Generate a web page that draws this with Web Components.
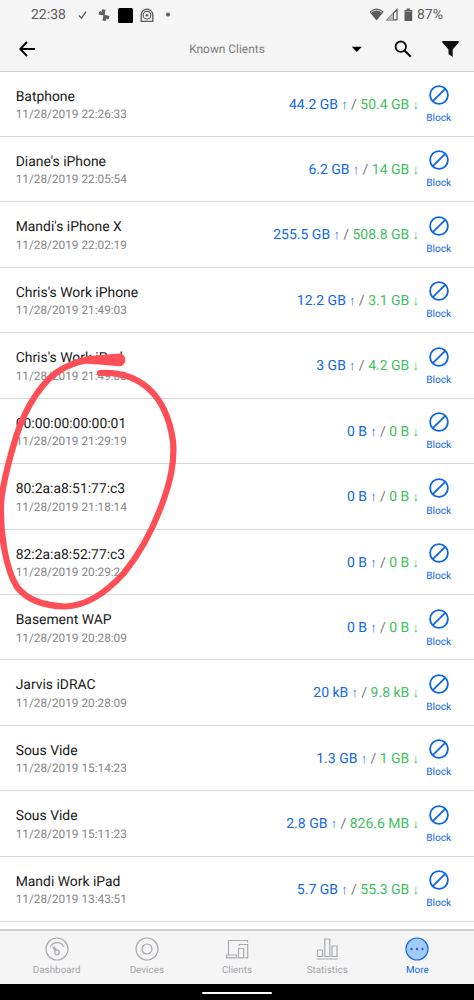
<!DOCTYPE html>
<html lang="en">
<head>
<meta charset="utf-8">
<title>Known Clients</title>
<style>
html,body{margin:0;height:100%;overflow:hidden;background:#fff}
body{font-family:Roboto,sans-serif;text-rendering:geometricPrecision}
</style>
</head>
<body>
<clients-app></clients-app>
<script>
const define = (name, html, init) => customElements.define(name, class extends HTMLElement {
  connectedCallback() {
    if (this.shadowRoot) return;
    const root = this.attachShadow({ mode: 'open' });
    const t = document.createElement('template');
    t.innerHTML = html;
    root.append(t.content.cloneNode(true));
    if (init) init.call(this, root);
  }
});

define('status-bar', `<style>
:host{display:flex;align-items:center;height:29px;padding:0 31px 0 31px;color:#5c5c5c;font-size:14px;line-height:29px}
svg{display:block;flex:none}
.grow{flex:1}
.time{width:47px;padding-top:1px}
.pct{margin-left:1px;padding-top:1px}
</style>
<span class="time">22:38</span>
<svg width="84" height="20" viewBox="78 4 84 20" fill="none" stroke="#5c5c5c">
<path d="M79 14.500l2.500 2.700L86 10.700" stroke-width="1.400"/>
<g fill="#5c5c5c" stroke="none" transform="rotate(12 104 14.200)"><path d="M104.400 14.200V8.700h-2.600a1.600 1.600 0 0 0 0 3v2.500z"/><path d="M104 13.800h5.500v2.600a1.600 1.600 0 0 1-3 0H104z"/><path d="M103.600 14.200v5.500h2.600a1.600 1.600 0 0 0 0-3v-2.500z"/><path d="M104 14.600h-5.500V12a1.600 1.600 0 0 1 3 0h2.500z"/></g>
<rect x="118" y="7" width="15" height="15" rx="1.500" fill="#000" stroke="none"/>
<path d="M141.200 20.300V14a5.800 5.800 0 0 1 11.600 0v6.300z" stroke-width="1.300"/><circle cx="147" cy="14.200" r="3.800" stroke-width="1.200"/><circle cx="147" cy="14.200" r="1.300" fill="#5c5c5c" stroke="none"/>
</svg>
<svg width="8" height="20" viewBox="0 0 8 20"><circle cx="6" cy="9.500" r="2" fill="#5c5c5c"/></svg>
<span class="grow"></span>
<svg width="46" height="20" viewBox="370 4.500 46 20" fill="#5c5c5c">
<path d="M369.300 11.200Q376.500 5 383.700 11.200L376.500 20z"/><path d="M371 11.700q5.500-4 11 0" fill="none" stroke="#d8d8d8" stroke-width="1"/>
<path d="M387 19.300L397 9v10.300z" fill="none" stroke="#5c5c5c" stroke-width="1.200"/><path d="M387 19.300L393.500 12.500v6.800z" fill="#bbb"/><path d="M393.500 12v7.500" stroke="#5c5c5c"/>
<path d="M404.500 9.500h2.200V8h3.200v1.500h2.300v11h-7.700z"/><path d="M405.500 11h5.700" stroke="#aaa" stroke-width=".8"/>
</svg>
<span class="pct">87%</span>`);

define('app-header', `<style>
:host{display:flex;align-items:center;justify-content:space-between;height:40px;padding:0 15px 0 19px}
svg{display:block}
.title{font-size:11.900px;color:#7c7c7c;margin-left:67px}
.left,.right{margin-top:-1px}
</style>
<svg class="left" width="17" height="16" viewBox="0 0 17 16" fill="none" stroke="#000" stroke-width="1.900"><path d="M16 8H1.500M8 1L1.300 8 8 15"/></svg>
<span class="title"><slot></slot></span>
<svg class="right" width="108" height="20" viewBox="351 39 108 20">
<path d="M351.800 46.800h10l-5 5.200z" fill="#000"/>
<circle cx="400.800" cy="46.700" r="5.200" fill="none" stroke="#111" stroke-width="1.900"/><path d="M404.500 50.500l6.300 6.200" stroke="#111" stroke-width="2.300"/>
<path d="M442.300 41h16.400v1.500l-6 7V57l-4.200-3v-4.500l-6.200-7z" fill="#111"/>
</svg>`);

define('block-button', `<style>
:host{display:flex;flex-direction:column;align-items:center;width:32px;color:#1269e4;font-size:10.200px;line-height:14px}
svg{display:block;margin-bottom:7px}
</style>
<svg width="20" height="20" viewBox="0 0 20 20" fill="none" stroke="#0d66e8" stroke-width="1.800"><circle cx="10" cy="10" r="8.900"/><path d="M16.200 3.800L3.800 16.200"/></svg>
<span>Block</span>`);

define('traffic-value', `<style>
:host{display:flex;align-items:center}
.arrow{margin-left:3.500px;width:6px;font:13px/20px "Liberation Sans",sans-serif;display:flex;justify-content:center}
</style><slot></slot><span class="arrow"></span>`, function (root) {
  root.querySelector('.arrow').textContent = this.getAttribute('direction') === 'up' ? '↑' : '↓';
});

define('client-row', `<style>
:host{display:flex;height:65.450px;box-sizing:border-box;border-bottom:1px solid #d7d7d7;padding:0 19.300px 0 15.700px}
.info{flex:1;padding-top:16px;min-width:0}
.name{font-size:13.900px;line-height:19px;color:#191919}
.date{font-size:11.800px;line-height:16px;color:#858585;margin-top:-.5px}
.usage{display:flex;height:20px;font-size:14px;line-height:20px;padding-top:23px;color:#777}
.slash{margin:0 3.500px}
.up{color:#1269e4}.down{color:#3fbf61}
block-button{margin:13.500px 0 0 3.900px}
</style>
<div class="info"><div class="name"></div><div class="date"></div></div>
<div class="usage"><traffic-value class="up" direction="up"></traffic-value><span class="slash">/</span><traffic-value class="down" direction="down"></traffic-value></div>
<block-button></block-button>`, function (root) {
  for (const key of ['name', 'date', 'up', 'down'])
    root.querySelector('.' + key).textContent = this.getAttribute(key);
});

define('nav-tab', `<style>
:host{display:flex;flex-direction:column;align-items:center;width:90.200px;color:#a3a5aa;font-size:9.900px;line-height:14px}
:host([active]){color:#1269e4}
::slotted(svg){display:block;width:24px;height:24px;margin:6px 0 3px;overflow:visible}
</style><slot name="icon"></slot><span><slot></slot></span>`);

define('tab-bar', `<style>
:host{display:flex;justify-content:center;height:55px;box-sizing:border-box;border-top:2px solid #d0d0d0;background:#f5f5f6}
svg{fill:none;stroke:#a9abaf;stroke-width:1.200}
</style>
<nav-tab><svg slot="icon" viewBox="0 0 24 24"><circle cx="12" cy="12" r="11"/><path d="M5.200 10a7.500 7.500 0 0 1 13.700 0M7.500 10l3 3.500M9 9.500l2.500 3.500"/><circle cx="12" cy="15.400" r="2.200"/></svg>Dashboard</nav-tab>
<nav-tab><svg slot="icon" viewBox="0 0 24 24"><circle cx="12" cy="12" r="11"/><circle cx="12" cy="12" r="5"/></svg>Devices</nav-tab>
<nav-tab><svg slot="icon" viewBox="0 0 24 24"><path d="M3.500 18V3.500H22.500V5.500M1.500 18H11.500V20.800H1.500zM14 9V7.500H22.700V20.800H20M13.500 11.500h5.200v9.300h-5.200z"/></svg>Clients</nav-tab>
<nav-tab><svg slot="icon" viewBox="0 0 24 24"><path d="M2 22h20.500M2.500 13h5v6.500h-5zM9.800 2h5v17.500h-5zM17 9h5v10.500h-5z"/></svg>Statistics</nav-tab>
<nav-tab active><svg slot="icon" viewBox="0 0 24 24"><circle cx="12" cy="12" r="11" fill="#a3cbf7" stroke="#1769e2"/><g fill="#1769e2" stroke="none"><circle cx="6.500" cy="12" r="1.200"/><circle cx="12" cy="12" r="1.200"/><circle cx="17.500" cy="12" r="1.200"/></g></svg>More</nav-tab>`);

define('gesture-bar', `<style>
:host{display:flex;justify-content:center;align-items:center;height:16px;background:#000}
span{width:70px;height:2px;background:#fff;border-radius:1px;margin-top:1px}
</style><span></span>`);

define('ink-markup', `<style>
:host{position:absolute;left:0;top:340px;width:200px;height:280px;pointer-events:none}
svg{display:block}
</style>
<svg width="200" height="280" viewBox="0 340 200 280">
<g fill="none" stroke="#fd4f55" stroke-linecap="round" stroke-linejoin="round">
<path stroke-width="6.200" d="M100 373C120 372 136 377 149 389C162 401 170 420 173 441C175 463 170 483 161 507C153 528 142 551 124 573C105 594 84 606 65 606.500C45 606 28 601 17 587C5 568 0 530 1 503C3 481 9 460 16 437C26 405 44 379 62 369C72 363 82 360 96 359.500"/>
</g>
<path fill="#fd4f55" d="M70 362Q82 356 96 355.500L119 353.500a6.200 6.200 0 0 1 0 12.800Q94 364 86 363.500Q76 365 69 369z"/>
</svg>`);

const clients = [
  ['Batphone', '22:26:33', '44.2 GB', '50.4 GB'],
  ["Diane's iPhone", '22:05:54', '6.2 GB', '14 GB'],
  ["Mandi's iPhone X", '22:02:19', '255.5 GB', '508.8 GB'],
  ["Chris's Work iPhone", '21:49:03', '12.2 GB', '3.1 GB'],
  ["Chris's Work iPad", '21:49:03', '3 GB', '4.2 GB'],
  ['00:00:00:00:00:01', '21:29:19', '0 B', '0 B'],
  ['80:2a:a8:51:77:c3', '21:18:14', '0 B', '0 B'],
  ['82:2a:a8:52:77:c3', '20:29:24', '0 B', '0 B'],
  ['Basement WAP', '20:28:09', '0 B', '0 B'],
  ['Jarvis iDRAC', '20:28:09', '20 kB', '9.8 kB'],
  ['Sous Vide', '15:14:23', '1.3 GB', '1 GB'],
  ['Sous Vide', '15:11:23', '2.8 GB', '826.6 MB'],
  ['Mandi Work iPad', '13:43:51', '5.7 GB', '55.3 GB']
];

define('clients-app', `<style>
:host{display:flex;flex-direction:column;width:474px;height:1000px;position:relative;overflow:hidden;background:#fff}
.top{background:#f5f5f5;height:71.500px;flex:none;box-sizing:border-box;border-bottom:1px solid #cdcdcd}
main{flex:1;min-height:0;overflow:hidden}
tab-bar,gesture-bar{flex:none}
</style>
<div class="top"><status-bar></status-bar><app-header>Known Clients</app-header></div>
<main></main>
<tab-bar></tab-bar><gesture-bar></gesture-bar><ink-markup></ink-markup>`, function (root) {
  const main = root.querySelector('main');
  for (const [name, time, up, down] of clients) {
    const row = document.createElement('client-row');
    row.setAttribute('name', name);
    row.setAttribute('date', '11/28/2019 ' + time);
    row.setAttribute('up', up);
    row.setAttribute('down', down);
    main.append(row);
  }
});
</script>
</body>
</html>
